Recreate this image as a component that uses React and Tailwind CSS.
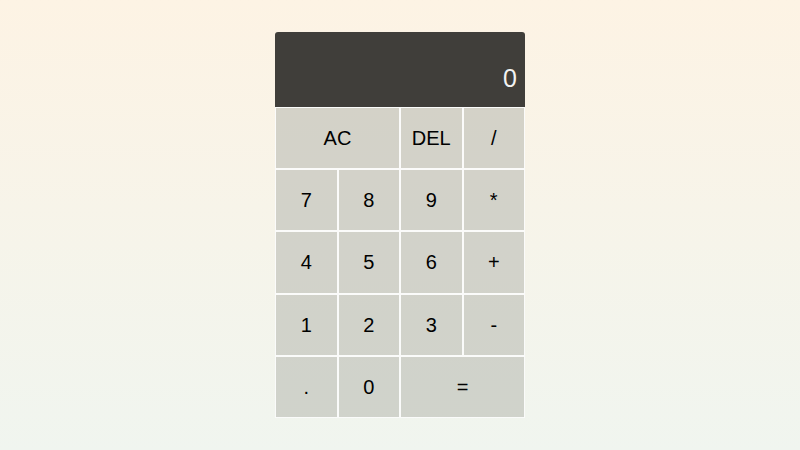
export default function App() {
  const btn =
    "flex items-center justify-center border border-white/90 bg-[#b4b6ae]/55 text-[20px] text-black cursor-pointer";
  return (
    <div
      className="w-full h-[450px] flex items-center justify-center bg-gradient-to-b from-[#fdf3e4] to-[#f0f5ef]"
      style={{ fontFamily: '"Liberation Sans", Arial, sans-serif' }}
    >
      <div className="grid grid-cols-[repeat(4,62.5px)] grid-rows-[75px_repeat(5,62.4px)]">
        <div className="col-span-4 flex flex-col items-end justify-end bg-[#403e3a] rounded-t-[3px] px-[8px] pb-[16px]">
          <div className="text-[25px] leading-none text-[#f2f2f2]">0</div>
        </div>
        <button className={`${btn} col-span-2`}>AC</button>
        <button className={btn}>DEL</button>
        <button className={btn}>/</button>
        <button className={btn}>7</button>
        <button className={btn}>8</button>
        <button className={btn}>9</button>
        <button className={btn}>*</button>
        <button className={btn}>4</button>
        <button className={btn}>5</button>
        <button className={btn}>6</button>
        <button className={btn}>+</button>
        <button className={btn}>1</button>
        <button className={btn}>2</button>
        <button className={btn}>3</button>
        <button className={btn}>-</button>
        <button className={btn}>.</button>
        <button className={btn}>0</button>
        <button className={`${btn} col-span-2`}>=</button>
      </div>
    </div>
  );
}
